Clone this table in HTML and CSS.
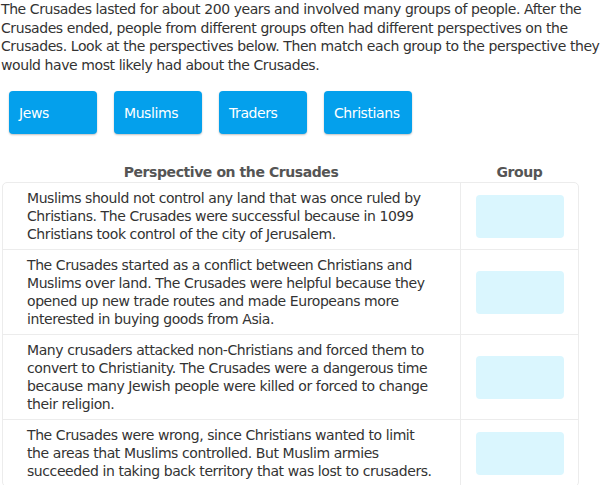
FILE: index.html
```html
<!DOCTYPE html>
<html>
<head>
<meta charset="utf-8">
<link rel="stylesheet" href="styles.css">
</head>
<body>
<p class="intro">The Crusades lasted for about 200 years and involved many groups of people. After the Crusades ended, people from different groups often had different perspectives on the Crusades. Look at the perspectives below. Then match each group to the perspective they would have most likely had about the Crusades.</p>
<div class="choices">
  <div class="chip">Jews</div>
  <div class="chip">Muslims</div>
  <div class="chip">Traders</div>
  <div class="chip">Christians</div>
</div>
<div class="match">
  <div class="head">
    <div class="head-cell">Perspective on the Crusades</div>
    <div class="head-cell">Group</div>
  </div>
  <div class="table">
    <div class="row">
      <div class="text">Muslims should not control any land that was once ruled by Christians. The Crusades were successful because in 1099 Christians took control of the city of Jerusalem.</div>
      <div class="slot"><div class="drop"></div></div>
    </div>
    <div class="row">
      <div class="text">The Crusades started as a conflict between Christians and Muslims over land. The Crusades were helpful because they opened up new trade routes and made Europeans more interested in buying goods from Asia.</div>
      <div class="slot"><div class="drop"></div></div>
    </div>
    <div class="row">
      <div class="text">Many crusaders attacked non-Christians and forced them to convert to Christianity. The Crusades were a dangerous time because many Jewish people were killed or forced to change their religion.</div>
      <div class="slot"><div class="drop"></div></div>
    </div>
    <div class="row">
      <div class="text">The Crusades were wrong, since Christians wanted to limit the areas that Muslims controlled. But Muslim armies succeeded in taking back territory that was lost to crusaders.</div>
      <div class="slot"><div class="drop"></div></div>
    </div>
  </div>
</div>
</body>
</html>
```
FILE: styles.css
```css
html, body {
  margin: 0;
  padding: 0;
  background: #ffffff;
}
body {
  font-family: "DejaVu Sans", Verdana, sans-serif;
  font-size: 14px;
  letter-spacing: -0.42px;
  color: #333333;
  width: 600px;
}
.intro {
  margin: 0;
  padding: 0 0 0 1px;
  line-height: 18.5px;
}
.choices {
  display: flex;
  gap: 17px;
  margin: 17px 0 0 9px;
}
.chip {
  width: 88px;
  height: 43px;
  box-sizing: border-box;
  padding-left: 10px;
  display: flex;
  align-items: center;
  background: #04a0ec;
  color: #ffffff;
  border-radius: 4px;
  box-shadow: 0 1px 2px rgba(0, 0, 0, 0.25);
}
.match {
  margin: 29px 0 0 2px;
  width: 577px;
}
.head {
  display: grid;
  grid-template-columns: 458px 1fr;
  height: 19px;
}
.head-cell {
  text-align: center;
  font-weight: bold;
  color: #555555;
  line-height: 18px;
}
.table {
  border: 1px solid #ececec;
  border-radius: 5px;
}
.row {
  display: grid;
  grid-template-columns: 458px 1fr;
  border-bottom: 1px solid #ececec;
}
.row:last-child {
  border-bottom: none;
}
.text {
  padding: 6px 28px 6px 24px;
  line-height: 18px;
  border-right: 1px solid #ececec;
}
.slot {
  display: flex;
  align-items: center;
  justify-content: center;
}
.drop {
  width: 88px;
  height: 43px;
  background: #daf6fe;
  border-radius: 4px;
}
```
